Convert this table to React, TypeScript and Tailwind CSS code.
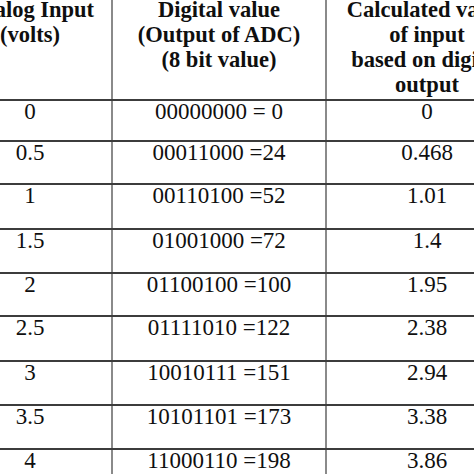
const rows = [
  { v: "0", d: "00000000 = 0", c: "0", h: "h-[41px]" },
  { v: "0.5", d: "00011000 =24", c: "0.468", h: "h-[43px]" },
  { v: "1", d: "00110100 =52", c: "1.01", h: "h-[45px]" },
  { v: "1.5", d: "01001000 =72", c: "1.4", h: "h-[44px]" },
  { v: "2", d: "01100100 =100", c: "1.95", h: "h-[43px]" },
  { v: "2.5", d: "01111010 =122", c: "2.38", h: "h-[45px]" },
  { v: "3", d: "10010111 =151", c: "2.94", h: "h-[44px]" },
  { v: "3.5", d: "10101101 =173", c: "3.38", h: "h-[44px]" },
  { v: "4", d: "11000110 =198", c: "3.86", h: "h-[44px]" },
];

const App = () => {
  return (
    <div className="w-[474px] h-[474px] overflow-hidden bg-white text-[#0f0f0f] font-['Liberation_Serif',serif]">
      <div className="w-[578px] -ml-[51px] -mt-[3px]">
        {/* header */}
        <div className="grid grid-cols-[162px_216px_200px] h-[104px] border-b-2 border-[#3c3c3c] font-bold text-[22.5px] leading-[25px] text-center">
          <div>
            Analog Input
            <br />
            (volts)
          </div>
          <div className="border-x-2 border-[#8a8a8a]">
            Digital value
            <br />
            (Output of ADC)
            <br />
            (8 bit value)
          </div>
          <div>
            Calculated value
            <br />
            of input
            <br />
            based on digital
            <br />
            output
          </div>
        </div>

        {rows.map((r) => (
          <div
            key={r.v}
            className={`grid grid-cols-[162px_216px_200px] ${r.h} border-b-2 border-[#3c3c3c] text-[23px] leading-[21px] text-center`}
          >
            <div>{r.v}</div>
            <div className="border-x-2 border-[#8a8a8a]">{r.d}</div>
            <div>{r.c}</div>
          </div>
        ))}

        <div className="grid grid-cols-[162px_216px_200px] h-[44px] text-[23px] leading-[21px] text-center">
          <div>4.5</div>
          <div className="border-x-2 border-[#8a8a8a]">11100110 =230</div>
          <div>4.49</div>
        </div>
      </div>
    </div>
  );
};

export default App;
